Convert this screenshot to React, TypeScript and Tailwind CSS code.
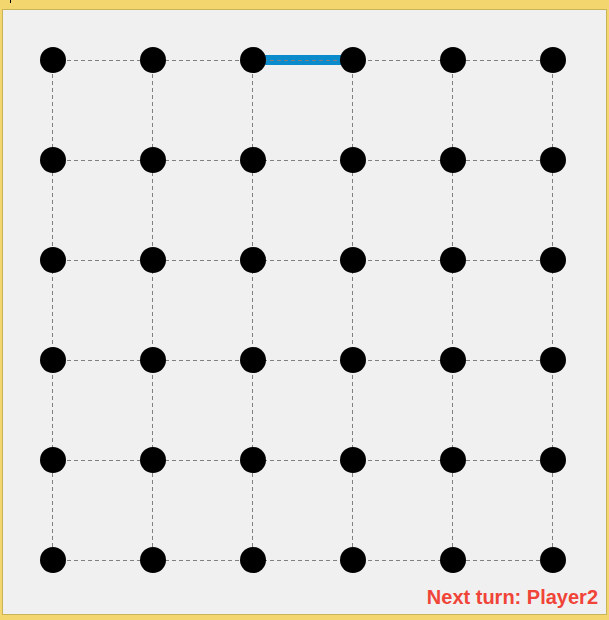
import React from "react";

const N = 6;
const S = 100;
const O = 50;

export default function App() {
  const idx = Array.from({ length: N }, (_, i) => i);
  return (
    <div className="w-[609px] h-[620px] bg-[#f3d76e] pt-[9px] pl-[2px] pr-[2px] pb-[5px] relative">
      <div className="absolute left-[10px] top-0 w-[1px] h-[3px] bg-black" />
      <div className="w-full h-full border border-[#c9b458] bg-[#f0f0f0] flex flex-col">
        <svg width="603" height="575" className="block shrink-0">
          {/* highlighted line */}
          <line x1={O + 2 * S} y1={O} x2={O + 3 * S} y2={O} stroke="#0a8ccc" strokeWidth="10" />
          {idx.map((i) => (
            <line
              key={"h" + i}
              x1={O}
              y1={O + i * S + 0.5}
              x2={O + (N - 1) * S}
              y2={O + i * S + 0.5}
              stroke="#808080"
              strokeWidth="1"
              strokeDasharray="4 3"
            />
          ))}
          {idx.map((i) => (
            <line
              key={"v" + i}
              x1={O + i * S - 0.5}
              y1={O}
              x2={O + i * S - 0.5}
              y2={O + (N - 1) * S}
              stroke="#808080"
              strokeWidth="1"
              strokeDasharray="4 3"
            />
          ))}
          {idx.map((r) =>
            idx.map((c) => (
              <circle key={r + "-" + c} cx={O + c * S} cy={O + r * S} r="13" fill="#000" />
            ))
          )}
        </svg>
        <div className="flex justify-end pr-[8px]">
          <span className="text-[20px] leading-[24px] font-bold text-[#f04438] [font-family:'Liberation_Sans',Arial,sans-serif]">
            Next turn: Player2
          </span>
        </div>
      </div>
    </div>
  );
}
